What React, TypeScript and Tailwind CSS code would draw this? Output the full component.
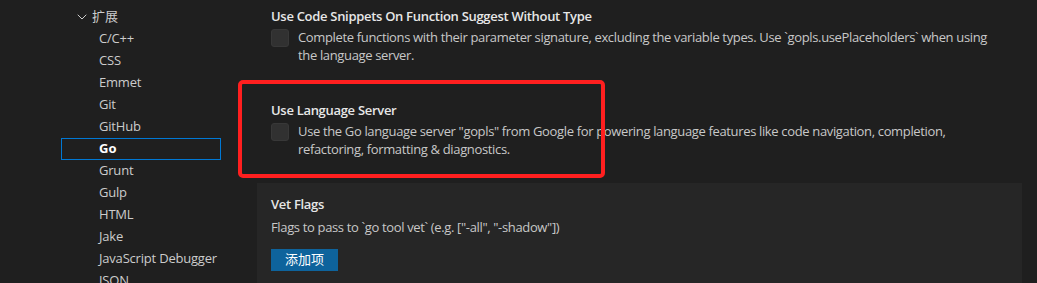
import { ChevronDown } from "lucide-react";

const font = { fontFamily: '"Open Sans", "Noto Sans", "Noto Sans CJK SC", sans-serif' };

const navItems = ["C/C++", "CSS", "Emmet", "Git", "GitHub", "Go", "Grunt", "Gulp", "HTML", "Jake", "JavaScript Debugger", "JSON"];

function Checkbox() {
  return <div className="h-[18px] w-[18px] shrink-0 rounded-[3px] border border-[#383838] bg-[#313131]" />;
}

function BoolSetting({ title, lines, className = "" }: { title: string; lines: string[]; className?: string }) {
  return (
    <div className={`pl-[14px] pr-4 pt-3 pb-[25px] ${className}`}>
      <div className="h-[18px] text-[13px] font-semibold leading-[18px] tracking-[-0.3px] text-[#e7e7e7]">{title}</div>
      <div className="mt-[4px] flex gap-[9px]">
        <Checkbox />
        <div className="-mt-px text-[13px] leading-[18px] tracking-[-0.35px] text-[#c8c8c8]">
          {lines.map((l) => (
            <div key={l} className="whitespace-nowrap">{l}</div>
          ))}
        </div>
      </div>
    </div>
  );
}

export default function App() {
  return (
    <div className="relative flex h-[283px] w-[1037px] overflow-hidden bg-[#1f1f1f]" style={font}>
      <aside className="w-[257px] shrink-0 pt-[6px] pl-[61px]">
        <div className="flex h-[22px] w-[160px] items-center text-[13px] text-[#cccccc]">
          <ChevronDown className="ml-[13px] h-4 w-4 text-[#cccccc]" strokeWidth={1.5} />
          <span className="ml-[2px]">扩展</span>
        </div>
        {navItems.map((item) =>
          item === "Go" ? (
            <div key={item} className="flex h-[22px] w-[160px] items-center border border-[#0078d4] pl-[37px] text-[13px] font-bold text-white">
              {item}
            </div>
          ) : (
            <div key={item} className="flex h-[22px] w-[160px] items-center pl-[38px] text-[13px] tracking-[-0.2px] text-[#cccccc]">
              {item}
            </div>
          )
        )}
      </aside>

      <main className="flex w-[765px] flex-col">
        <BoolSetting
          className="-mt-[5px]"
          title="Use Code Snippets On Function Suggest Without Type"
          lines={[
            "Complete functions with their parameter signature, excluding the variable types. Use `gopls.usePlaceholders` when using",
            "the language server.",
          ]}
        />
        <BoolSetting
          title="Use Language Server"
          lines={[
            'Use the Go language server "gopls" from Google for powering language features like code navigation, completion,',
            "refactoring, formatting & diagnostics.",
          ]}
        />
        <div className="flex-1 bg-[#262626] pl-[14px] pt-3">
          <div className="h-[18px] text-[13px] font-semibold leading-[18px] tracking-[-0.3px] text-[#e7e7e7]">Vet Flags</div>
          <div className="mt-[5px] text-[13px] leading-[18px] tracking-[-0.35px] text-[#c8c8c8]">
            Flags to pass to `go tool vet` (e.g. ["-all", "-shadow"])
          </div>
          <button className="mt-[13px] h-[22px] w-[67px] bg-[#0e639c] text-[13px] text-white">添加项</button>
        </div>
      </main>

      {/* annotation box */}
      <div className="absolute left-[238px] top-[80px] h-[98px] w-[367px] rounded-[5px] border-4 border-[#ff1f1f]" />
    </div>
  );
}
